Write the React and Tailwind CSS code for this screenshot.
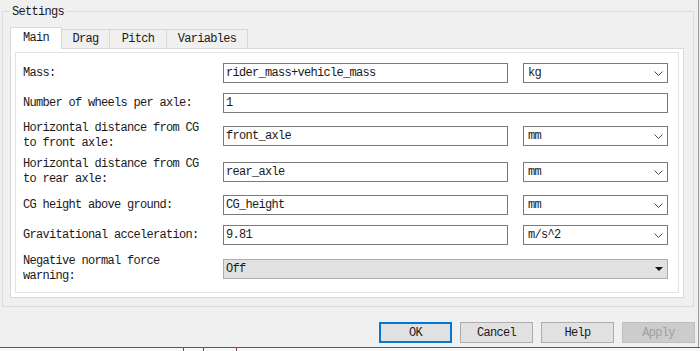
import React from "react";

const Chevron = () => (
  <svg width="9" height="5" viewBox="0 0 9 5" className="shrink-0">
    <path d="M0.5 0.5l4 4 4-4" fill="none" stroke="#4a4a4a" strokeWidth="1" />
  </svg>
);

const Caret = () => (
  <svg width="8" height="4" viewBox="0 0 8 4" className="shrink-0">
    <path d="M0 0h8L4 4z" fill="#111" />
  </svg>
);

const TextBox = ({ value, wide }) => (
  <div
    className={`${wide ? "w-[445px]" : "w-[285px]"} h-[20px] border border-[#7a7a7a] bg-white px-[2px] flex items-center whitespace-nowrap`}
  >
    {value}
  </div>
);

const UnitSelect = ({ value }) => (
  <div className="ml-[15px] w-[145px] h-[20px] border border-[#7a7a7a] bg-white pl-[4px] pr-[4px] flex items-center justify-between whitespace-nowrap">
    <span>{value}</span>
    <Chevron />
  </div>
);

const Row = ({ label, tall, className, children }) => (
  <div className={`flex items-center pl-[7px] ${tall ? "h-[30px]" : "h-[20px]"} ${className}`}>
    <div className="w-[200px] shrink-0 leading-[15px]">{label}</div>
    {children}
  </div>
);

const Tab = ({ label, active, width }) =>
  active ? (
    <div className={`${width} h-[22px] bg-white border-l border-t border-r border-[#d9d9d9] flex items-center justify-center pb-[1px]`}>
      {label}
    </div>
  ) : (
    <div className={`${width} h-[20px] bg-[#f0f0f0] border-t border-r border-b border-[#d9d9d9] flex items-center justify-center`}>
      {label}
    </div>
  );

const DialogButton = ({ label, primary, disabled }) => (
  <div
    className={`w-[73px] h-[21px] flex items-center justify-center ${
      primary
        ? "border-2 border-[#0078d7] bg-[#e1e1e1]"
        : disabled
        ? "border border-[#bfbfbf] bg-[#cccccc] text-[#a0a0a0]"
        : "border border-[#adadad] bg-[#e1e1e1]"
    }`}
  >
    {label}
  </div>
);

export default function App() {
  return (
    <div className="w-[700px] h-[351px] bg-[#f0f0f0] flex flex-col overflow-hidden font-['Liberation_Mono',monospace] text-[12px] tracking-[-0.7px] text-[#1a1a1a]">
      <div className="h-[347px] w-[699px] border-r border-[#9a9a9a] flex flex-col">
        {/* Settings group */}
        <div className="pt-[11px] pl-[2px]">
          <div className="w-[692px] h-[296px] border border-[#dcdcdc] flex flex-col">
            <div className="-mt-[7px] ml-[7px] px-[2px] bg-[#f0f0f0] self-start leading-[14px] h-[14px]">
              Settings
            </div>

            <div className="mt-[8px] ml-[7px] flex flex-col">
              <div className="flex items-end h-[22px] relative z-10">
                <Tab label="Main" active width="w-[52px]" />
                <Tab label="Drag" width="w-[48px]" />
                <Tab label="Pitch" width="w-[57px]" />
                <Tab label="Variables" width="w-[81px]" />
              </div>

              <div className="-mt-px w-[674px] h-[250px] border border-[#d9d9d9] bg-white pt-[3px] px-[4px] pb-[4px]">
                <div className="h-full border border-[#e3e3e3] pt-[10px] flex flex-col">
                  <Row label="Mass:">
                    <TextBox value="rider_mass+vehicle_mass" />
                    <UnitSelect value="kg" />
                  </Row>
                  <Row label="Number of wheels per axle:" className="mt-[10px]">
                    <TextBox value="1" wide />
                  </Row>
                  <Row
                    tall
                    className="mt-[8px]"
                    label={
                      <>
                        Horizontal distance from CG
                        <br />
                        to front axle:
                      </>
                    }
                  >
                    <TextBox value="front_axle" />
                    <UnitSelect value="mm" />
                  </Row>
                  <Row
                    tall
                    className="mt-[6px]"
                    label={
                      <>
                        Horizontal distance from CG
                        <br />
                        to rear axle:
                      </>
                    }
                  >
                    <TextBox value="rear_axle" />
                    <UnitSelect value="mm" />
                  </Row>
                  <Row label="CG height above ground:" className="mt-[8px]">
                    <TextBox value="CG_height" />
                    <UnitSelect value="mm" />
                  </Row>
                  <Row label="Gravitational acceleration:" className="mt-[10px]">
                    <TextBox value="9.81" />
                    <UnitSelect value="m/s^2" />
                  </Row>
                  <Row
                    tall
                    className="mt-[9px]"
                    label={
                      <>
                        Negative normal force
                        <br />
                        warning:
                      </>
                    }
                  >
                    <div className="w-[445px] h-[20px] border border-[#adadad] bg-[#e1e1e1] pl-[2px] pr-[4px] flex items-center justify-between">
                      <span>Off</span>
                      <Caret />
                    </div>
                  </Row>
                </div>
              </div>
            </div>
          </div>
        </div>

        {/* Buttons */}
        <div className="mt-[15px] flex justify-end gap-[8px] pr-[3px]">
          <DialogButton label="OK" primary />
          <DialogButton label="Cancel" />
          <DialogButton label="Help" />
          <DialogButton label="Apply" disabled />
        </div>
      </div>

      <div className="h-px bg-[#5a5a5a]" />
      <div className="h-[3px] bg-[#f7f7f7] flex">
        <div className="ml-[183px] w-px bg-[#7a4545]" />
        <div className="ml-[19px] w-px bg-[#7a4545]" />
        <div className="ml-[32px] w-px bg-[#7a4545]" />
      </div>
    </div>
  );
}
